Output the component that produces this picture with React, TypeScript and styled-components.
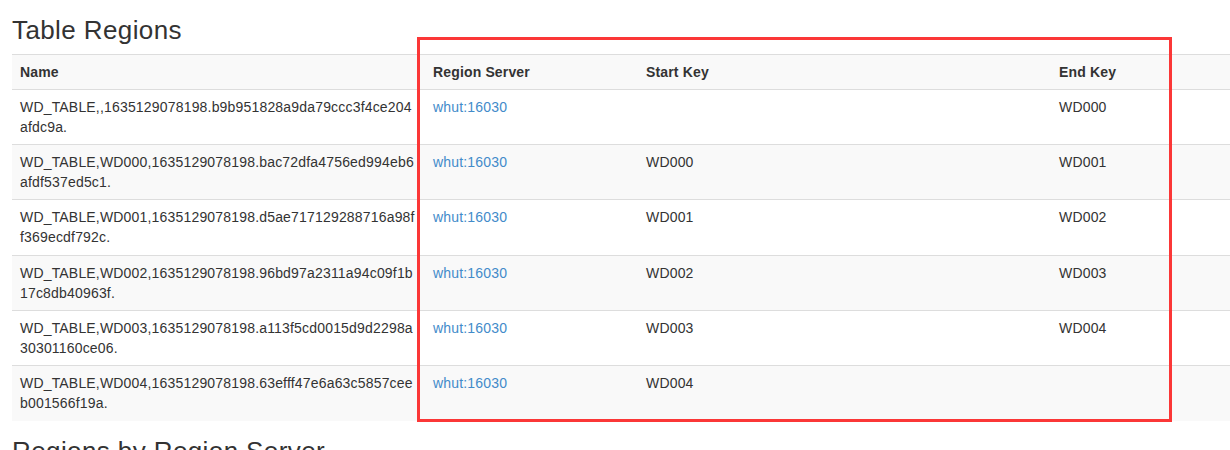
import React from "react";
import styled, { createGlobalStyle } from "styled-components";

const GlobalStyle = createGlobalStyle`
  html, body {
    margin: 0;
    padding: 0;
    background: #fff;
    overflow: hidden;
  }
  body {
    font-family: "Liberation Sans", Arial, Helvetica, sans-serif;
    font-size: 14px;
    line-height: 20px;
    color: #333;
  }
`;

const Page = styled.div`
  padding: 0 0 0 12px;
  width: 1600px;
`;

const Heading = styled.h2`
  margin: 16px 0 9px;
  font-size: 26px;
  font-weight: 400;
  line-height: 1.1;
  letter-spacing: 0.4px;
  color: #333;
`;

const TableWrap = styled.div`
  position: relative;
`;

const Table = styled.table`
  border-collapse: collapse;
  border-spacing: 0;
  table-layout: fixed;
  width: 1452px;
`;

const Col = styled.col<{ $w: number }>`
  width: ${(p) => p.$w}px;
`;

const HeadRow = styled.tr`
  background: #f9f9f9;
`;

const Th = styled.th`
  text-align: left;
  font-weight: 700;
  padding: 7px 8px;
  line-height: 20px;
  letter-spacing: 0.15px;
  border-top: 1px solid #ddd;
  border-bottom: 1px solid #ddd;
  vertical-align: bottom;
`;

const Row = styled.tr`
  &:nth-child(even) {
    background: #f9f9f9;
  }
`;

const Td = styled.td`
  padding: 7px 8px 7.33px;
  line-height: 20px;
  letter-spacing: 0.18px;
  border-top: 1px solid #ddd;
  vertical-align: top;
  word-break: break-all;
`;

const ServerLink = styled.a`
  color: #428bca;
  text-decoration: none;
`;

const Highlight = styled.div`
  position: absolute;
  left: 405px;
  top: -17px;
  width: 755px;
  height: 385px;
  box-sizing: border-box;
  border: 3px solid #fb3737;
  pointer-events: none;
`;

type Region = { name: string; start: string; end: string };

const regions: Region[] = [
  { name: "WD_TABLE,,1635129078198.b9b951828a9da79ccc3f4ce204afdc9a.", start: "", end: "WD000" },
  { name: "WD_TABLE,WD000,1635129078198.bac72dfa4756ed994eb6afdf537ed5c1.", start: "WD000", end: "WD001" },
  { name: "WD_TABLE,WD001,1635129078198.d5ae717129288716a98ff369ecdf792c.", start: "WD001", end: "WD002" },
  { name: "WD_TABLE,WD002,1635129078198.96bd97a2311a94c09f1b17c8db40963f.", start: "WD002", end: "WD003" },
  { name: "WD_TABLE,WD003,1635129078198.a113f5cd0015d9d2298a30301160ce06.", start: "WD003", end: "WD004" },
  { name: "WD_TABLE,WD004,1635129078198.63efff47e6a63c5857ceeb001566f19a.", start: "WD004", end: "" },
];

export default function App() {
  return (
    <>
      <GlobalStyle />
      <Page>
        <Heading>Table Regions</Heading>
        <TableWrap>
          <Table>
            <colgroup>
              <Col $w={413} />
              <Col $w={213} />
              <Col $w={413} />
              <Col $w={413} />
            </colgroup>
            <thead>
              <HeadRow>
                <Th>Name</Th>
                <Th>Region Server</Th>
                <Th>Start Key</Th>
                <Th>End Key</Th>
              </HeadRow>
            </thead>
            <tbody>
              {regions.map((r) => (
                <Row key={r.name}>
                  <Td>{r.name}</Td>
                  <Td>
                    <ServerLink href="#">whut:16030</ServerLink>
                  </Td>
                  <Td>{r.start}</Td>
                  <Td>{r.end}</Td>
                </Row>
              ))}
            </tbody>
          </Table>
          <Highlight />
        </TableWrap>
        <Heading>Regions by Region Server</Heading>
      </Page>
    </>
  );
}
